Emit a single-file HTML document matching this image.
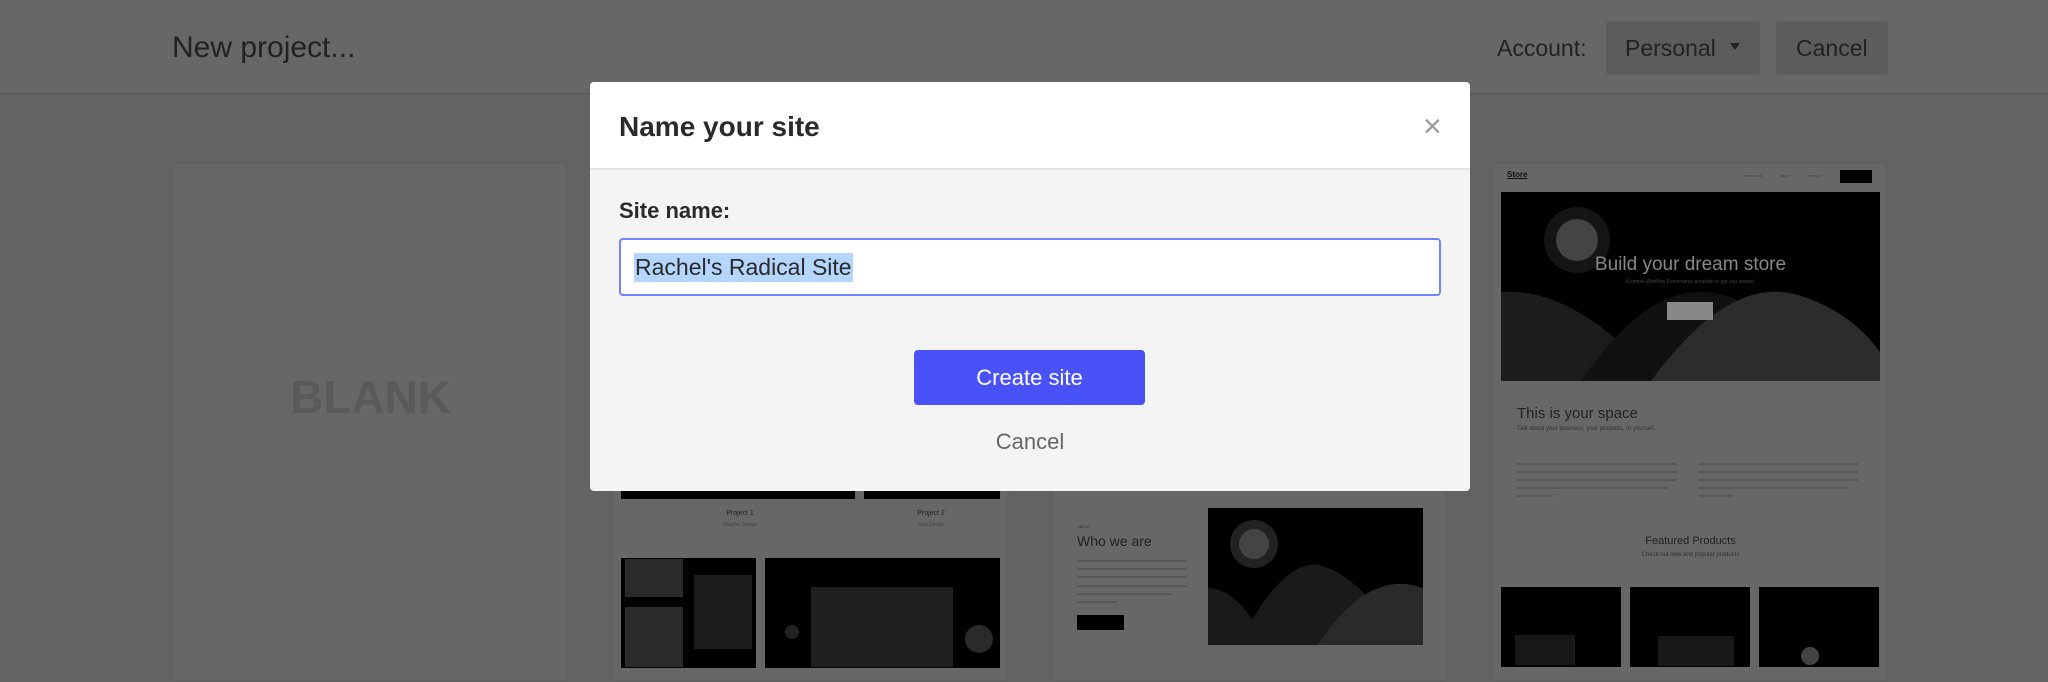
<!DOCTYPE html>
<html><head><meta charset="utf-8">
<style>
*{margin:0;padding:0;box-sizing:border-box}
body{width:2048px;height:666px;overflow:hidden;background:#636363;font-family:"Liberation Sans",sans-serif;position:relative}
.a{position:absolute}
.hdr{left:0;top:0;width:2048px;height:95px;background:#676767;border-bottom:2px solid #5c5c5c}
.card{background:#676767;border:2px solid #616161;border-radius:6px}
.blk{background:#000}
.line{height:2px;background:#575757}
</style></head><body>
<div class="a hdr"></div>
<div class="a" style="left:172px;top:31px;font-size:30px;color:#222">New project...</div>
<div class="a" style="left:1497px;top:35px;font-size:23px;color:#222">Account:</div>
<div class="a" style="left:1606px;top:21px;width:154px;height:54px;background:#5c5c5c;border-radius:4px"></div>
<div class="a" style="left:1625px;top:35px;font-size:23px;color:#222">Personal</div>
<div class="a" style="left:1730px;top:43px;width:0;height:0;border-left:5px solid transparent;border-right:5px solid transparent;border-top:7px solid #222"></div>
<div class="a" style="left:1776px;top:21px;width:112px;height:54px;background:#5c5c5c;border-radius:4px"></div>
<div class="a" style="left:1796px;top:35px;font-size:23px;color:#222">Cancel</div>

<!-- card1 -->
<div class="a card" style="left:172px;top:162px;width:397px;height:520px"></div>
<div class="a" style="left:172px;top:370px;width:397px;text-align:center;font-size:46px;font-weight:bold;color:#5a5a5a">BLANK</div>

<!-- card2 -->
<div class="a card" style="left:612px;top:162px;width:397px;height:520px"></div>
<div class="a blk" style="left:621px;top:470px;width:234px;height:29px"></div>
<div class="a blk" style="left:864px;top:470px;width:136px;height:29px"></div>
<div class="a" style="left:700px;top:510px;width:80px;text-align:center;font-size:7px;color:#222">Project 1</div>
<div class="a" style="left:700px;top:522px;width:80px;text-align:center;font-size:5px;color:#444">Graphic Design</div>
<div class="a" style="left:891px;top:510px;width:80px;text-align:center;font-size:7px;color:#222">Project 2</div>
<div class="a" style="left:891px;top:522px;width:80px;text-align:center;font-size:5px;color:#444">Web Design</div>
<div class="a blk" style="left:621px;top:558px;width:135px;height:110px"></div>
<div class="a" style="left:625px;top:559px;width:58px;height:38px;background:#2a2a2a"></div>
<div class="a" style="left:625px;top:607px;width:58px;height:60px;background:#2a2a2a"></div>
<div class="a" style="left:694px;top:575px;width:58px;height:74px;background:#1c1c1c"></div>
<div class="a blk" style="left:765px;top:558px;width:235px;height:110px"></div>
<div class="a" style="left:811px;top:587px;width:142px;height:80px;background:#202020"></div>
<div class="a" style="left:785px;top:625px;width:14px;height:14px;border-radius:50%;background:#222"></div>
<div class="a" style="left:965px;top:625px;width:28px;height:28px;border-radius:50%;background:#2a2a2a"></div>

<!-- card3 -->
<div class="a card" style="left:1052px;top:162px;width:396px;height:520px"></div>
<div class="a" style="left:1077px;top:524px;font-size:4px;color:#333">ABOUT</div>
<div class="a" style="left:1077px;top:533px;font-size:14px;color:#222">Who we are</div>
<div class="a line" style="left:1077px;top:560px;width:110px"></div>
<div class="a line" style="left:1077px;top:568px;width:110px"></div>
<div class="a line" style="left:1077px;top:576px;width:110px"></div>
<div class="a line" style="left:1077px;top:585px;width:110px"></div>
<div class="a line" style="left:1077px;top:593px;width:95px"></div>
<div class="a line" style="left:1077px;top:601px;width:40px"></div>
<div class="a blk" style="left:1077px;top:615px;width:47px;height:15px"></div>
<div class="a blk" style="left:1208px;top:508px;width:215px;height:137px;overflow:hidden">
<svg width="215" height="137"><circle cx="46" cy="36" r="24" fill="#222"/><circle cx="46" cy="36" r="15" fill="#444"/><path d="M0 80 Q30 80 60 137 L0 137Z M30 137 Q80 40 120 60 Q150 70 200 137Z" fill="#1a1a1a"/><path d="M110 137 Q160 60 215 80 L215 137Z" fill="#2a2a2a"/></svg></div>

<!-- card4 store -->
<div class="a card" style="left:1492px;top:162px;width:397px;height:520px"></div>
<div class="a" style="left:1507px;top:170px;font-size:8px;font-weight:bold;color:#111;text-decoration:underline">Store</div>
<div class="a" style="left:1745px;top:174px;font-size:3px;color:#333">PRODUCTS</div>
<div class="a" style="left:1780px;top:174px;font-size:3px;color:#333">ABOUT</div>
<div class="a" style="left:1808px;top:174px;font-size:3px;color:#333">CONTACT</div>
<div class="a blk" style="left:1840px;top:170px;width:32px;height:13px"></div>
<div class="a blk" style="left:1501px;top:192px;width:379px;height:189px;overflow:hidden">
<svg width="379" height="189"><circle cx="76" cy="48" r="33" fill="#151515"/><circle cx="76" cy="48" r="21" fill="#444"/><path d="M0 100 Q60 95 130 160 Q150 180 160 189 L0 189Z" fill="#1c1c1c"/><path d="M80 189 Q160 70 240 110 Q260 130 230 189Z" fill="#111"/><path d="M150 189 Q230 80 300 104 Q350 120 379 160 L379 189Z" fill="#2c2c2c"/></svg>
<div class="a" style="left:0;top:62px;width:379px;text-align:center;font-size:19px;color:#888">Build your dream store</div>
<div class="a" style="left:0;top:87px;width:379px;text-align:center;font-size:5px;color:#444">A simple Webflow Ecommerce template to get you started.</div>
<div class="a" style="left:166px;top:110px;width:46px;height:18px;background:#888"></div>
</div>
<div class="a" style="left:1517px;top:405px;font-size:15px;color:#222">This is your space</div>
<div class="a" style="left:1517px;top:426px;font-size:6px;color:#333">Talk about your business, your products, or yourself.</div>
<div class="a line" style="left:1517px;top:463px;width:160px"></div>
<div class="a line" style="left:1517px;top:471px;width:160px"></div>
<div class="a line" style="left:1517px;top:479px;width:160px"></div>
<div class="a line" style="left:1517px;top:487px;width:150px"></div>
<div class="a line" style="left:1517px;top:495px;width:36px"></div>
<div class="a line" style="left:1698px;top:463px;width:160px"></div>
<div class="a line" style="left:1698px;top:471px;width:160px"></div>
<div class="a line" style="left:1698px;top:479px;width:160px"></div>
<div class="a line" style="left:1698px;top:487px;width:150px"></div>
<div class="a line" style="left:1698px;top:495px;width:36px"></div>
<div class="a" style="left:1492px;top:535px;width:397px;text-align:center;font-size:11px;color:#222">Featured Products</div>
<div class="a" style="left:1492px;top:552px;width:397px;text-align:center;font-size:6px;color:#333">Check out new and popular products</div>
<div class="a blk" style="left:1501px;top:587px;width:120px;height:80px"></div>
<div class="a blk" style="left:1630px;top:587px;width:120px;height:80px"></div>
<div class="a blk" style="left:1759px;top:587px;width:120px;height:80px"></div>
<div class="a" style="left:1515px;top:635px;width:60px;height:30px;background:#181818"></div>
<div class="a" style="left:1658px;top:636px;width:76px;height:30px;background:#181818"></div>
<div class="a" style="left:1801px;top:647px;width:18px;height:18px;border-radius:50%;background:#444"></div>

<!-- modal -->
<div class="a" style="left:590px;top:82px;width:880px;height:409px;background:#f4f4f4;border-radius:4px;overflow:hidden">
<div class="a" style="left:0;top:0;width:880px;height:88px;background:#fff;border-bottom:2px solid #e4e4e4"></div>
<div class="a" style="left:29px;top:29px;font-size:28px;font-weight:bold;color:#2a2a2a">Name your site</div>
<div class="a" style="left:833px;top:26px;font-size:32px;color:#9a9a9a">×</div>
<div class="a" style="left:29px;top:116px;font-size:22px;font-weight:bold;color:#2a2a2a">Site name:</div>
<div class="a" style="left:29px;top:156px;width:822px;height:58px;background:#fff;border:2px solid #7681ff;border-radius:4px"></div>
<div class="a" style="left:44px;top:171px;height:29px;line-height:29px;padding:0 1px;font-size:23px;color:#2a2a2a;background:#b4d5fd">Rachel's Radical Site</div>
<div class="a" style="left:324px;top:268px;width:231px;height:55px;background:#4852f6;border-radius:4px;color:#fff;font-size:22px;text-align:center;line-height:55px">Create site</div>
<div class="a" style="left:0;top:347px;width:880px;text-align:center;font-size:22px;color:#666">Cancel</div>
</div>
</body></html>
